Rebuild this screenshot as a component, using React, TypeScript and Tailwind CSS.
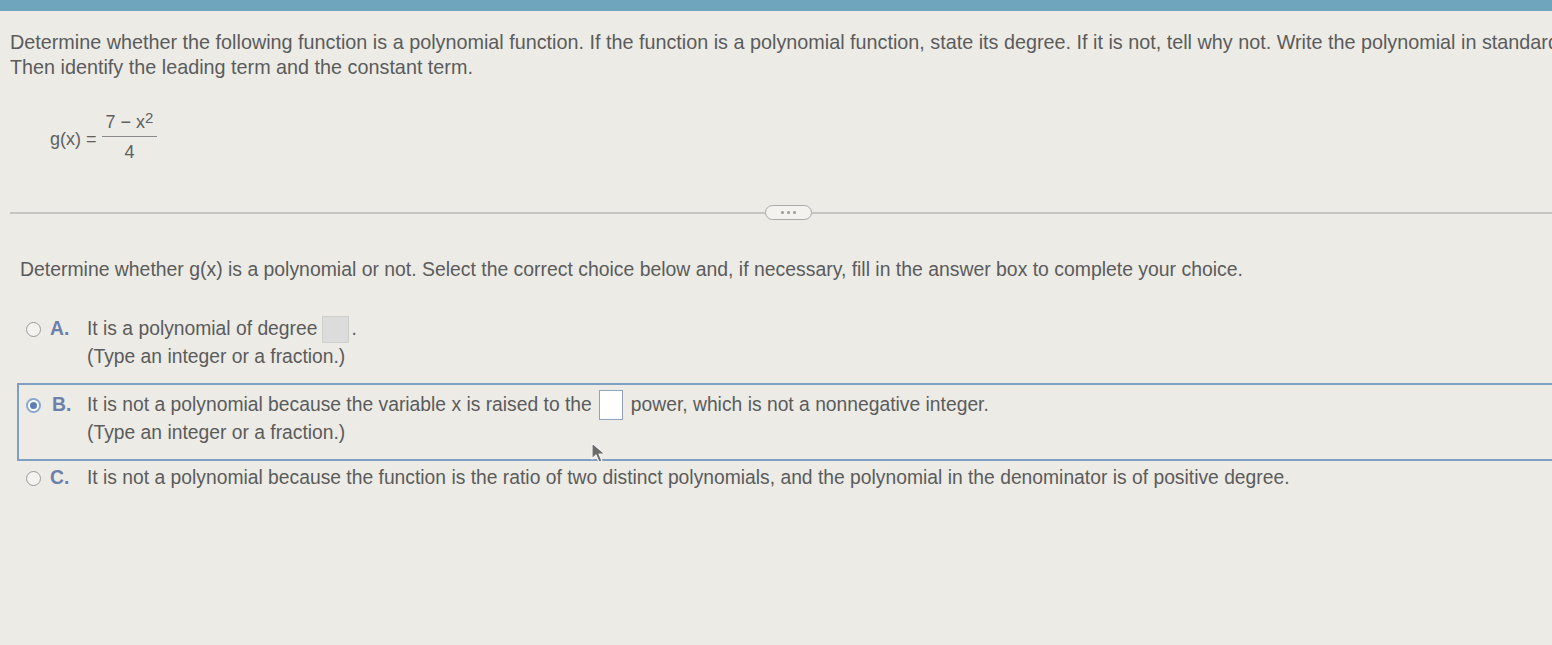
const Radio = ({ checked }: { checked?: boolean }) => (
  <span
    className={
      checked
        ? "flex h-[15px] w-[15px] shrink-0 items-center justify-center rounded-full border-2 border-[#8aa6d0] bg-white"
        : "flex h-[15px] w-[15px] shrink-0 items-center justify-center rounded-full border border-[#9a9a9a] bg-[#f4f3f0]"
    }
  >
    {checked && <span className="h-[7px] w-[7px] rounded-full bg-[#5f7fb8]" />}
  </span>
)

const Cursor = () => (
  <svg
    className="pointer-events-none absolute left-[591px] top-[442px]"
    width="16"
    height="22"
    viewBox="0 0 16 22"
  >
    <path
      d="M1 1 L1 17 L5 13 L8 20 L11 19 L8 12 L14 12 Z"
      fill="#6b6b6b"
      stroke="#f2f2f2"
      strokeWidth="1.2"
      strokeLinejoin="round"
    />
  </svg>
)

const App = () => {
  return (
    <div className="relative h-[645px] w-[1552px] overflow-hidden bg-[#ecebe6] font-['Liberation_Sans',Arial,sans-serif] text-[#5b5b5b]">
      {/* top bar */}
      <div className="h-[11px] w-full bg-[#6fa5bd]" />

      {/* question stem */}
      <div className="px-[10px] pt-[19px] text-[19.8px] leading-[25px]">
        <p className="whitespace-nowrap">
          Determine whether the following function is a polynomial function. If the function is a polynomial function, state its degree. If it is not, tell why not. Write the polynomial in standard form.
        </p>
        <p className="whitespace-nowrap">Then identify the leading term and the constant term.</p>
      </div>

      {/* formula */}
      <div className="ml-[50px] mt-[31px] flex items-center gap-[5px] text-[18px] text-[#606060]">
        <span className="pt-[6px]">g(x) =</span>
        <div className="flex flex-col items-center">
          <span className="border-b border-[#8a8a8a] px-[4px] pb-[3px] leading-[22px]">
            7 − x<sup className="relative -top-[5px] text-[15px]">2</sup>
          </span>
          <span className="pt-[5px] leading-[20px]">4</span>
        </div>
      </div>

      {/* divider */}
      <div className="mt-[43px] flex items-center pl-[10px]">
        <div className="h-[2px] w-[755px] bg-[#c6c5c1]" />
        <div className="flex h-[15px] w-[47px] items-center justify-center gap-[3px] rounded-full border border-[#a9a9a9] bg-[#f3f2ef]">
          <span className="h-[3px] w-[3px] rounded-full bg-[#9a9a9a]" />
          <span className="h-[3px] w-[3px] rounded-full bg-[#9a9a9a]" />
          <span className="h-[3px] w-[3px] rounded-full bg-[#9a9a9a]" />
        </div>
        <div className="h-[2px] flex-1 bg-[#c6c5c1]" />
      </div>

      {/* prompt */}
      <p className="mt-[37px] whitespace-nowrap pl-[20px] text-[19.4px] leading-[25px]">
        Determine whether g(x) is a polynomial or not. Select the correct choice below and, if necessary, fill in the answer box to complete your choice.
      </p>

      {/* choices */}
      <div className="mt-[33px] flex flex-col pl-[17px] text-[19.3px]">
        {/* A */}
        <div className="flex items-start pl-[9px]">
          <div className="flex h-[28px] items-center">
            <Radio />
          </div>
          <span className="ml-[9px] w-[37px] font-bold leading-[28px] text-[#6c80aa]">A.</span>
          <div className="flex flex-col">
            <div className="flex h-[28px] items-center whitespace-nowrap">
              It is a polynomial of degree
              <span className="ml-[5px] h-[27px] w-[27px] border border-[#cfcfcf] bg-[#dcdcdc]" />
              <span className="ml-[2px]">.</span>
            </div>
            <div className="leading-[28px]">(Type an integer or a fraction.)</div>
          </div>
        </div>

        {/* B */}
        <div className="mt-[12px] flex items-start border-y-2 border-l-2 border-[#7f9fc3] pb-[13px] pl-[7px] pt-[5px]">
          <div className="flex h-[30px] items-center">
            <Radio checked />
          </div>
          <span className="ml-[11px] w-[35px] font-bold leading-[30px] text-[#6c80aa]">B.</span>
          <div className="flex flex-col">
            <div className="flex h-[30px] items-center whitespace-nowrap">
              It is not a polynomial because the variable x is raised to the
              <span className="ml-[7px] mr-[8px] h-[30px] w-[24px] border border-[#8ea2bd] bg-white" />
              power, which is not a nonnegative integer.
            </div>
            <div className="leading-[26px]">(Type an integer or a fraction.)</div>
          </div>
        </div>

        {/* C */}
        <div className="mt-[4px] flex items-center pl-[9px]">
          <Radio />
          <span className="ml-[9px] w-[37px] font-bold leading-[26px] text-[#6c80aa]">C.</span>
          <span className="whitespace-nowrap leading-[26px]">
            It is not a polynomial because the function is the ratio of two distinct polynomials, and the polynomial in the denominator is of positive degree.
          </span>
        </div>
      </div>

      <Cursor />
    </div>
  )
}

export default App
